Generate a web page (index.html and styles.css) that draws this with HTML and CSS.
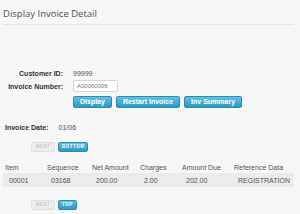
FILE: index.html
```html
<!DOCTYPE html>
<html lang="en">
<head>
    <meta charset="UTF-8">
    <title>Display Invoice Detail</title>
    <meta name="viewport" content="width=device-width, initial-scale=1.0">
    <link rel="stylesheet" href="styles.css">
</head>
<body>
    <h1 class="page-title">Display Invoice Detail</h1>

    <div class="lookup-form">
        <label class="form-label">Customer ID:</label>
        <span class="form-value">99999</span>

        <label class="form-label" for="invoiceNumber">Invoice Number:</label>
        <div><input class="invoice-input" id="invoiceNumber" type="text" value="A00060006"></div>

        <span></span>
        <div class="button-row">
            <button class="blue-button">Display</button>
            <button class="blue-button">Restart Invoice</button>
            <button class="blue-button">Inv Summary</button>
        </div>
    </div>

    <div class="invoice-date">
        <span class="form-label">Invoice Date:</span>
        <span class="form-value">01/06</span>
    </div>

    <div class="pager">
        <button class="pager-button disabled">Next</button>
        <button class="pager-button">Bottom</button>
    </div>

    <table class="detail-table">
        <colgroup>
            <col style="width: 42px">
            <col style="width: 45px">
            <col style="width: 48px">
            <col style="width: 42px">
            <col style="width: 52px">
            <col style="width: 62px">
        </colgroup>
        <thead>
            <tr>
                <th>Item</th>
                <th>Sequence</th>
                <th>Net Amount</th>
                <th>Charges</th>
                <th>Amount Due</th>
                <th>Reference Data</th>
            </tr>
        </thead>
        <tbody>
            <tr>
                <td>00001</td>
                <td>03168</td>
                <td>200.00</td>
                <td>2.00</td>
                <td>202.00</td>
                <td>REGISTRATION</td>
            </tr>
        </tbody>
    </table>

    <div class="pager pager-bottom">
        <button class="pager-button disabled">Next</button>
        <button class="pager-button">Top</button>
    </div>
</body>
</html>
```

FILE: styles.css
```css
body {
    margin: 0;
    padding: 0 3px;
    background-color: #f7f7f7;
    font-family: 'Liberation Sans', Arial, sans-serif;
    font-size: 7px;
    color: #444;
}

.page-title {
    margin: 0 3px 0 0;
    padding: 7px 0 4px 0;
    font-family: 'Open Sans', sans-serif;
    font-size: 9.5px;
    font-weight: normal;
    color: #555;
    border-bottom: 1px solid #e6e6e6;
}

/* customer / invoice lookup */
.lookup-form {
    display: grid;
    grid-template-columns: 60px auto;
    column-gap: 10px;
    row-gap: 3px;
    align-items: center;
    margin-top: 45px;
}

.form-label {
    font-weight: bold;
    color: #333;
    text-align: right;
}

.form-value {
    color: #555;
}

.invoice-input {
    width: 45px;
    height: 12px;
    box-sizing: border-box;
    padding: 0 3px;
    border: 1px solid #d6d6d6;
    border-radius: 2px;
    background-color: white;
    font-family: 'Liberation Sans', Arial, sans-serif;
    font-size: 6px;
    color: #777;
}

.button-row {
    display: flex;
    gap: 4px;
    margin-top: 1px;
}

.blue-button {
    height: 12px;
    padding: 0 6px;
    border: 1px solid #2b8db3;
    border-radius: 2px;
    background: linear-gradient(#62c0e2, #2c9ac5);
    color: white;
    font-family: 'Liberation Sans', Arial, sans-serif;
    font-size: 7px;
    font-weight: bold;
    line-height: 10px;
    cursor: pointer;
}

.invoice-date {
    display: flex;
    gap: 10px;
    margin: 16px 0 0 2px;
}

/* next / bottom / top */
.pager {
    display: flex;
    gap: 3px;
    margin: 11px 0 0 28px;
}

.pager-button {
    height: 10px;
    padding: 0 3px;
    border: 1px solid #2b8db3;
    border-radius: 2px;
    background: linear-gradient(#5dbde0, #2c9ac5);
    color: white;
    font-family: 'Liberation Sans', Arial, sans-serif;
    font-size: 4.5px;
    font-weight: bold;
    letter-spacing: 0.5px;
    text-transform: uppercase;
    line-height: 8px;
    cursor: pointer;
}

.pager-button.disabled {
    background: #ececec;
    border-color: #e0e0e0;
    color: #c8c8c8;
    padding: 0 4px;
}

.pager-bottom {
    margin-top: 13px;
}

.detail-table {
    width: 291px;
    margin-top: 9px;
    border-collapse: collapse;
    table-layout: fixed;
    color: #555;
}

.detail-table th {
    height: 12px;
    padding: 0 0 0 2px;
    text-align: left;
    font-weight: normal;
    color: #555;
}

.detail-table td {
    height: 14px;
    padding: 0 0 0 6px;
    background-color: #ebebeb;
}
```
